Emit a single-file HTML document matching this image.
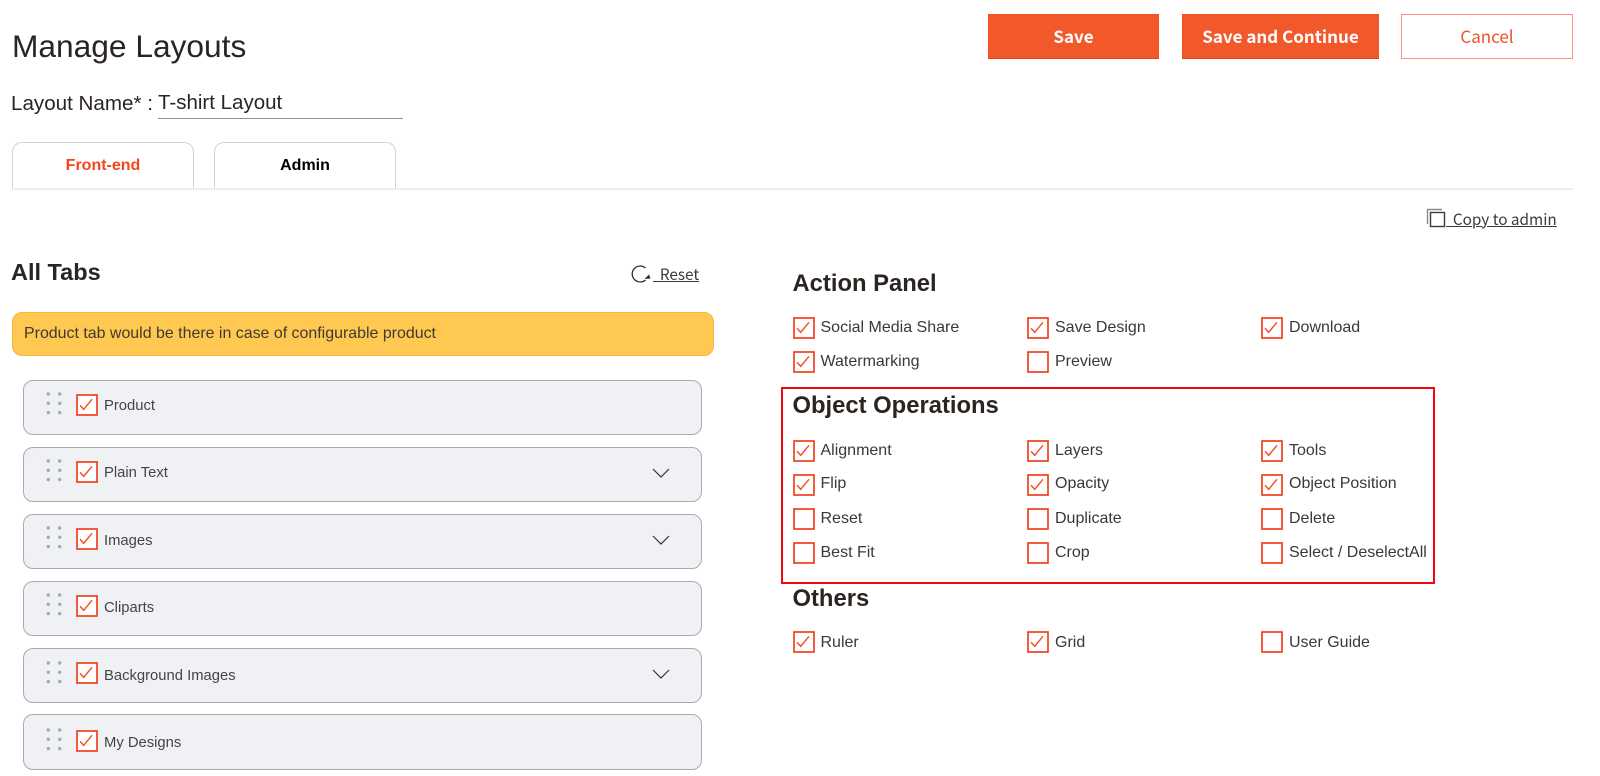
<!DOCTYPE html>
<html lang="en">
<head>
<meta charset="utf-8">
<title>Manage Layouts</title>
<style>
html,body{margin:0;padding:0;background:#fff;width:1600px;height:776px;overflow:hidden}
body{position:relative;font-family:"Liberation Sans",sans-serif;color:#2b2522}
.t{position:absolute;white-space:pre;line-height:20px}
.btn{position:absolute;top:14px;height:45px;box-sizing:border-box;background:#f2592a;border:1px solid #f4511e;border-bottom-color:#f13c0a;color:#fff;text-align:center;line-height:41px;font-family:"Noto Sans CJK SC","Liberation Sans",sans-serif;font-weight:700;font-size:17px}
.tab{position:absolute;top:142px;width:182px;height:47px;box-sizing:border-box;border:1px solid #d2d2d2;border-bottom:0;border-radius:10px 10px 0 0;text-align:center;font-weight:700;font-size:16px;line-height:45px}
.row{position:absolute;left:23px;width:679px;height:55px;box-sizing:border-box;background:#f0f1f5;border:1px solid #a9abb3;border-radius:10px}
.c{position:absolute;width:22px;height:22px}
.dots{position:absolute;left:46px;width:16px;height:24px}
.l{position:absolute;white-space:nowrap;font-size:16px;line-height:20px;color:#3a3838}
.s{font-size:14.800px;color:#44434a}
.h{position:absolute;white-space:nowrap;font-weight:700;font-size:23.800px;line-height:26px;color:#2b2522}
.chev{position:absolute;left:652px;width:18px;height:10px}
.u{font-family:"Noto Sans CJK SC","Liberation Sans",sans-serif;font-size:15.300px;color:#3c3836;text-decoration:underline}
</style>
</head>
<body>
<div class="t" style="left:12px;top:27px;font-size:31.700px;line-height:38px">Manage Layouts</div>
<div class="t" style="left:11px;top:94px;font-size:20.600px">Layout Name* :</div>
<div class="t" style="left:158px;top:93px;font-size:20.500px">T-shirt Layout</div>
<div style="position:absolute;left:158px;top:118px;width:245px;height:1px;background:#8f8f8f"></div>

<div class="btn" style="left:988px;width:171px">Save</div>
<div class="btn" style="left:1182px;width:197px">Save and Continue</div>
<div class="btn" style="left:1401px;width:172px;background:#fff;border-color:#ff9080;color:#f2502a;font-weight:400;font-size:17px">Cancel</div>

<div class="tab" style="left:12px;color:#f4471c">Front-end</div>
<div class="tab" style="left:214px;color:#000">Admin</div>
<div style="position:absolute;left:12px;top:188px;width:1561px;height:2px;background:#eeeeef"></div>

<svg style="position:absolute;left:1426px;top:208px" width="20" height="20" viewBox="0 0 20 20"><path d="M1.500 16V1.500H16" fill="none" stroke="#8a8a8a" stroke-width="1.400"/><rect x="4.500" y="4.500" width="14" height="14" fill="#fff" stroke="#3c3c3c" stroke-width="1.400"/></svg>
<div class="t u" style="left:1446px;top:209px">  Copy to admin</div>

<div class="t" style="left:11px;top:259px;font-size:23.500px;font-weight:700;line-height:26px">All Tabs</div>
<svg style="position:absolute;left:630px;top:264px" width="22" height="22" viewBox="0 0 22 22"><path d="M15.500 4A8 8 0 1 0 15.500 16" fill="none" stroke="#2d2d2d" stroke-width="1.300"/><path d="M14.500 15L20.500 14.500L19 10.500Z" fill="#2d2d2d"/></svg>
<div class="t u" style="left:653px;top:264px">  Reset</div>

<div style="position:absolute;left:12px;top:312px;width:702px;height:44px;box-sizing:border-box;background:#fec851;border:1px solid #fbb33a;border-radius:10px"></div>
<div class="t" style="left:24px;top:324px;font-size:15.950px;color:#3f3a30">Product tab would be there in case of configurable product</div>

<!-- rows -->
<div class="row" style="top:380px"></div>
<div class="row" style="top:447px"></div>
<div class="row" style="top:514px"></div>
<div class="row" style="top:581px"></div>
<div class="row" style="top:648px"></div>
<div class="row" style="top:714px;height:56px"></div>

<svg class="dots" style="top:392px" viewBox="0 0 16 24"><g fill="#a5a8b5"><circle cx="2.300" cy="2" r="1.700"/><circle cx="13.700" cy="2" r="1.700"/><circle cx="2.300" cy="11.300" r="1.700"/><circle cx="13.700" cy="11.300" r="1.700"/><circle cx="2.300" cy="20.600" r="1.700"/><circle cx="13.700" cy="20.600" r="1.700"/></g></svg>
<svg class="dots" style="top:459px" viewBox="0 0 16 24"><g fill="#a5a8b5"><circle cx="2.300" cy="2" r="1.700"/><circle cx="13.700" cy="2" r="1.700"/><circle cx="2.300" cy="11.300" r="1.700"/><circle cx="13.700" cy="11.300" r="1.700"/><circle cx="2.300" cy="20.600" r="1.700"/><circle cx="13.700" cy="20.600" r="1.700"/></g></svg>
<svg class="dots" style="top:526px" viewBox="0 0 16 24"><g fill="#a5a8b5"><circle cx="2.300" cy="2" r="1.700"/><circle cx="13.700" cy="2" r="1.700"/><circle cx="2.300" cy="11.300" r="1.700"/><circle cx="13.700" cy="11.300" r="1.700"/><circle cx="2.300" cy="20.600" r="1.700"/><circle cx="13.700" cy="20.600" r="1.700"/></g></svg>
<svg class="dots" style="top:593px" viewBox="0 0 16 24"><g fill="#a5a8b5"><circle cx="2.300" cy="2" r="1.700"/><circle cx="13.700" cy="2" r="1.700"/><circle cx="2.300" cy="11.300" r="1.700"/><circle cx="13.700" cy="11.300" r="1.700"/><circle cx="2.300" cy="20.600" r="1.700"/><circle cx="13.700" cy="20.600" r="1.700"/></g></svg>
<svg class="dots" style="top:661px" viewBox="0 0 16 24"><g fill="#a5a8b5"><circle cx="2.300" cy="2" r="1.700"/><circle cx="13.700" cy="2" r="1.700"/><circle cx="2.300" cy="11.300" r="1.700"/><circle cx="13.700" cy="11.300" r="1.700"/><circle cx="2.300" cy="20.600" r="1.700"/><circle cx="13.700" cy="20.600" r="1.700"/></g></svg>
<svg class="dots" style="top:728px" viewBox="0 0 16 24"><g fill="#a5a8b5"><circle cx="2.300" cy="2" r="1.700"/><circle cx="13.700" cy="2" r="1.700"/><circle cx="2.300" cy="11.300" r="1.700"/><circle cx="13.700" cy="11.300" r="1.700"/><circle cx="2.300" cy="20.600" r="1.700"/><circle cx="13.700" cy="20.600" r="1.700"/></g></svg>

<svg class="c" style="left:75.500px;top:394px" viewBox="0 0 22 22"><rect x="1" y="1" width="20" height="20" fill="#fff" stroke="#f1401c" stroke-width="1.700"/><path d="M4 11.300L7.700 15.300L16 5.300" fill="none" stroke="#f4532a" stroke-width="1.500"/></svg>
<svg class="c" style="left:75.500px;top:461px" viewBox="0 0 22 22"><rect x="1" y="1" width="20" height="20" fill="#fff" stroke="#f1401c" stroke-width="1.700"/><path d="M4 11.300L7.700 15.300L16 5.300" fill="none" stroke="#f4532a" stroke-width="1.500"/></svg>
<svg class="c" style="left:75.500px;top:528px" viewBox="0 0 22 22"><rect x="1" y="1" width="20" height="20" fill="#fff" stroke="#f1401c" stroke-width="1.700"/><path d="M4 11.300L7.700 15.300L16 5.300" fill="none" stroke="#f4532a" stroke-width="1.500"/></svg>
<svg class="c" style="left:75.500px;top:595px" viewBox="0 0 22 22"><rect x="1" y="1" width="20" height="20" fill="#fff" stroke="#f1401c" stroke-width="1.700"/><path d="M4 11.300L7.700 15.300L16 5.300" fill="none" stroke="#f4532a" stroke-width="1.500"/></svg>
<svg class="c" style="left:75.500px;top:662px" viewBox="0 0 22 22"><rect x="1" y="1" width="20" height="20" fill="#fff" stroke="#f1401c" stroke-width="1.700"/><path d="M4 11.300L7.700 15.300L16 5.300" fill="none" stroke="#f4532a" stroke-width="1.500"/></svg>
<svg class="c" style="left:75.500px;top:730px" viewBox="0 0 22 22"><rect x="1" y="1" width="20" height="20" fill="#fff" stroke="#f1401c" stroke-width="1.700"/><path d="M4 11.300L7.700 15.300L16 5.300" fill="none" stroke="#f4532a" stroke-width="1.500"/></svg>

<div class="l s" style="left:104px;top:396px">Product</div>
<div class="l s" style="left:104px;top:463px">Plain Text</div>
<div class="l s" style="left:104px;top:531px">Images</div>
<div class="l s" style="left:104px;top:598px">Cliparts</div>
<div class="l s" style="left:104px;top:666px">Background Images</div>
<div class="l s" style="left:104px;top:733px">My Designs</div>

<svg class="chev" style="top:468px" viewBox="0 0 18 10"><path d="M1 1L9 9L17 1" fill="none" stroke="#333" stroke-width="1.200"/></svg>
<svg class="chev" style="top:535px" viewBox="0 0 18 10"><path d="M1 1L9 9L17 1" fill="none" stroke="#333" stroke-width="1.200"/></svg>
<svg class="chev" style="top:669px" viewBox="0 0 18 10"><path d="M1 1L9 9L17 1" fill="none" stroke="#333" stroke-width="1.200"/></svg>

<!-- right panel -->
<div class="h" style="left:792.500px;top:271px">Action Panel</div>
<div class="h" style="left:792.500px;top:393px">Object Operations</div>
<div class="h" style="left:792.500px;top:586px">Others</div>
<div style="position:absolute;left:780.500px;top:387px;width:654.500px;height:197px;box-sizing:border-box;border:2px solid #f5060f"></div>

<svg class="c" style="left:792.500px;top:317px" viewBox="0 0 22 22"><rect x="1" y="1" width="20" height="20" fill="#fff" stroke="#f1401c" stroke-width="1.700"/><path d="M4 11.300L7.700 15.300L16 5.300" fill="none" stroke="#f4532a" stroke-width="1.500"/></svg>
<svg class="c" style="left:1026.500px;top:317px" viewBox="0 0 22 22"><rect x="1" y="1" width="20" height="20" fill="#fff" stroke="#f1401c" stroke-width="1.700"/><path d="M4 11.300L7.700 15.300L16 5.300" fill="none" stroke="#f4532a" stroke-width="1.500"/></svg>
<svg class="c" style="left:1260.500px;top:317px" viewBox="0 0 22 22"><rect x="1" y="1" width="20" height="20" fill="#fff" stroke="#f1401c" stroke-width="1.700"/><path d="M4 11.300L7.700 15.300L16 5.300" fill="none" stroke="#f4532a" stroke-width="1.500"/></svg>
<svg class="c" style="left:792.500px;top:351px" viewBox="0 0 22 22"><rect x="1" y="1" width="20" height="20" fill="#fff" stroke="#f1401c" stroke-width="1.700"/><path d="M4 11.300L7.700 15.300L16 5.300" fill="none" stroke="#f4532a" stroke-width="1.500"/></svg>
<svg class="c" style="left:1026.500px;top:351px" viewBox="0 0 22 22"><rect x="1" y="1" width="20" height="20" fill="#fff" stroke="#f1401c" stroke-width="1.700"/></svg>

<svg class="c" style="left:792.500px;top:440px" viewBox="0 0 22 22"><rect x="1" y="1" width="20" height="20" fill="#fff" stroke="#f1401c" stroke-width="1.700"/><path d="M4 11.300L7.700 15.300L16 5.300" fill="none" stroke="#f4532a" stroke-width="1.500"/></svg>
<svg class="c" style="left:1026.500px;top:440px" viewBox="0 0 22 22"><rect x="1" y="1" width="20" height="20" fill="#fff" stroke="#f1401c" stroke-width="1.700"/><path d="M4 11.300L7.700 15.300L16 5.300" fill="none" stroke="#f4532a" stroke-width="1.500"/></svg>
<svg class="c" style="left:1260.500px;top:440px" viewBox="0 0 22 22"><rect x="1" y="1" width="20" height="20" fill="#fff" stroke="#f1401c" stroke-width="1.700"/><path d="M4 11.300L7.700 15.300L16 5.300" fill="none" stroke="#f4532a" stroke-width="1.500"/></svg>
<svg class="c" style="left:792.500px;top:474px" viewBox="0 0 22 22"><rect x="1" y="1" width="20" height="20" fill="#fff" stroke="#f1401c" stroke-width="1.700"/><path d="M4 11.300L7.700 15.300L16 5.300" fill="none" stroke="#f4532a" stroke-width="1.500"/></svg>
<svg class="c" style="left:1026.500px;top:474px" viewBox="0 0 22 22"><rect x="1" y="1" width="20" height="20" fill="#fff" stroke="#f1401c" stroke-width="1.700"/><path d="M4 11.300L7.700 15.300L16 5.300" fill="none" stroke="#f4532a" stroke-width="1.500"/></svg>
<svg class="c" style="left:1260.500px;top:474px" viewBox="0 0 22 22"><rect x="1" y="1" width="20" height="20" fill="#fff" stroke="#f1401c" stroke-width="1.700"/><path d="M4 11.300L7.700 15.300L16 5.300" fill="none" stroke="#f4532a" stroke-width="1.500"/></svg>
<svg class="c" style="left:792.500px;top:508px" viewBox="0 0 22 22"><rect x="1" y="1" width="20" height="20" fill="#fff" stroke="#f1401c" stroke-width="1.700"/></svg>
<svg class="c" style="left:1026.500px;top:508px" viewBox="0 0 22 22"><rect x="1" y="1" width="20" height="20" fill="#fff" stroke="#f1401c" stroke-width="1.700"/></svg>
<svg class="c" style="left:1260.500px;top:508px" viewBox="0 0 22 22"><rect x="1" y="1" width="20" height="20" fill="#fff" stroke="#f1401c" stroke-width="1.700"/></svg>
<svg class="c" style="left:792.500px;top:542px" viewBox="0 0 22 22"><rect x="1" y="1" width="20" height="20" fill="#fff" stroke="#f1401c" stroke-width="1.700"/></svg>
<svg class="c" style="left:1026.500px;top:542px" viewBox="0 0 22 22"><rect x="1" y="1" width="20" height="20" fill="#fff" stroke="#f1401c" stroke-width="1.700"/></svg>
<svg class="c" style="left:1260.500px;top:542px" viewBox="0 0 22 22"><rect x="1" y="1" width="20" height="20" fill="#fff" stroke="#f1401c" stroke-width="1.700"/></svg>

<svg class="c" style="left:792.500px;top:631px" viewBox="0 0 22 22"><rect x="1" y="1" width="20" height="20" fill="#fff" stroke="#f1401c" stroke-width="1.700"/><path d="M4 11.300L7.700 15.300L16 5.300" fill="none" stroke="#f4532a" stroke-width="1.500"/></svg>
<svg class="c" style="left:1026.500px;top:631px" viewBox="0 0 22 22"><rect x="1" y="1" width="20" height="20" fill="#fff" stroke="#f1401c" stroke-width="1.700"/><path d="M4 11.300L7.700 15.300L16 5.300" fill="none" stroke="#f4532a" stroke-width="1.500"/></svg>
<svg class="c" style="left:1260.500px;top:631px" viewBox="0 0 22 22"><rect x="1" y="1" width="20" height="20" fill="#fff" stroke="#f1401c" stroke-width="1.700"/></svg>

<div class="l" style="left:820.500px;top:318px">Social Media Share</div>
<div class="l" style="left:1055px;top:318px">Save Design</div>
<div class="l" style="left:1289px;top:318px">Download</div>
<div class="l" style="left:820.500px;top:352px">Watermarking</div>
<div class="l" style="left:1055px;top:352px">Preview</div>

<div class="l" style="left:820.500px;top:441px">Alignment</div>
<div class="l" style="left:1055px;top:441px">Layers</div>
<div class="l" style="left:1289px;top:441px">Tools</div>
<div class="l" style="left:820.500px;top:474px">Flip</div>
<div class="l" style="left:1055px;top:474px">Opacity</div>
<div class="l" style="left:1289px;top:474px">Object Position</div>
<div class="l" style="left:820.500px;top:509px">Reset</div>
<div class="l" style="left:1055px;top:509px">Duplicate</div>
<div class="l" style="left:1289px;top:509px">Delete</div>
<div class="l" style="left:820.500px;top:543px">Best Fit</div>
<div class="l" style="left:1055px;top:543px">Crop</div>
<div class="l" style="left:1289px;top:543px">Select / DeselectAll</div>

<div class="l" style="left:820.500px;top:633px">Ruler</div>
<div class="l" style="left:1055px;top:633px">Grid</div>
<div class="l" style="left:1289px;top:633px">User Guide</div>
</body>
</html>
